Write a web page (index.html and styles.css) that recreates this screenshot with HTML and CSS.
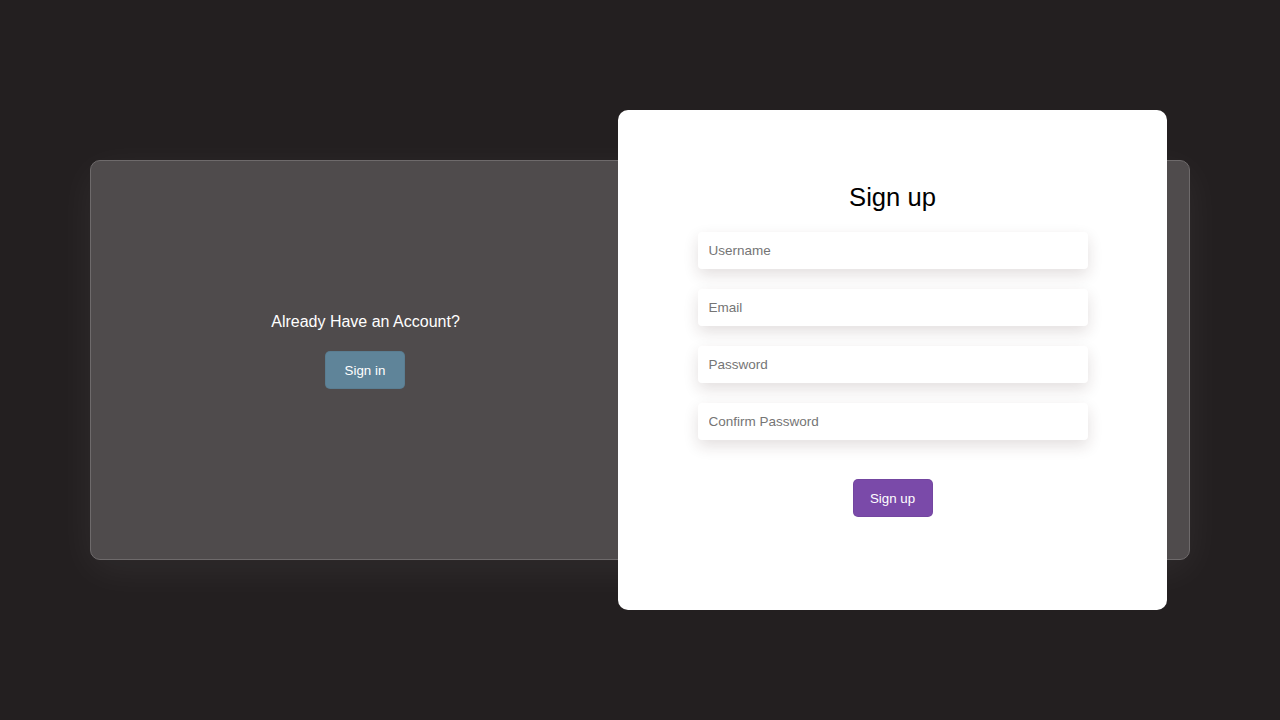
FILE: index.html
```html
<!DOCTYPE html>
<html>
  <head>
    <meta charset="UTF-8" />
    <meta name="viewport" content="width=device-width, initial-scale=1.0" />
    <title>Sign up</title>
    <link rel="stylesheet" href="styles.css">
  </head>
  <body>
    <div class="container">
      <div class="side">
        <p>Already Have an Account?</p>
        <button class="btn btn-signin">Sign in</button>
      </div>
      <div class="side"></div>

      <div class="form-box">
        <h2>Sign up</h2>
        <form class="form">
          <input type="text" placeholder="Username">
          <input type="email" placeholder="Email">
          <input type="password" placeholder="Password">
          <input type="password" placeholder="Confirm Password">
          <button type="button" class="btn btn-signup">Sign up</button>
        </form>
      </div>
    </div>
  </body>
</html>
```

FILE: styles.css
```css
* {
  box-sizing: border-box;
  margin: 0;
  padding: 0;
}

body {
  font-family: "Liberation Sans", Arial, sans-serif;
  background-color: #231f20;
  height: 720px;
  display: flex;
  justify-content: center;
  align-items: center;
}

.container {
  position: relative;
  width: 1100px;
  height: 400px;
  display: flex;
  background-color: #4f4b4c;
  border: 1px solid #6e6a6b;
  border-radius: 10px;
  box-shadow: 0 10px 40px rgba(255, 255, 255, 0.06);
}

.side {
  flex: 1;
  display: flex;
  flex-direction: column;
  align-items: center;
  justify-content: center;
  padding-bottom: 18px;
}

.side p {
  color: #fff;
  font-size: 16px;
  margin-bottom: 20px;
}

.btn {
  width: 80px;
  height: 38px;
  border: 1px solid rgba(0, 0, 0, 0.05);
  border-radius: 5px;
  color: #fff;
  font-family: inherit;
  font-size: 13.333px;
  cursor: pointer;
}

.btn-signin {
  margin-right: 1px;
  background-color: #5f8499;
}

.btn-signup {
  background-color: #7a4aa9;
  margin-top: 19px;
}

.form-box {
  position: absolute;
  left: 527px;
  top: -51px;
  width: 549px;
  height: 500px;
  background-color: #fff;
  border-radius: 10px;
  display: flex;
  flex-direction: column;
  align-items: center;
  padding-top: 73px;
}

.form-box h2 {
  font-size: 25.6px;
  font-weight: normal;
  color: #000;
  margin-bottom: 20px;
}

.form {
  width: 390px;
  display: flex;
  flex-direction: column;
  align-items: center;
  gap: 20px;
}

.form input {
  width: 100%;
  height: 37px;
  padding: 0 11px;
  border: none;
  border-radius: 4px;
  font-family: inherit;
  font-size: 13.5px;
  color: #333;
  background-color: #fff;
  box-shadow: 0 6px 15px rgba(60, 30, 30, 0.14);
  outline: none;
}

.form input::placeholder {
  color: #757575;
}
```
